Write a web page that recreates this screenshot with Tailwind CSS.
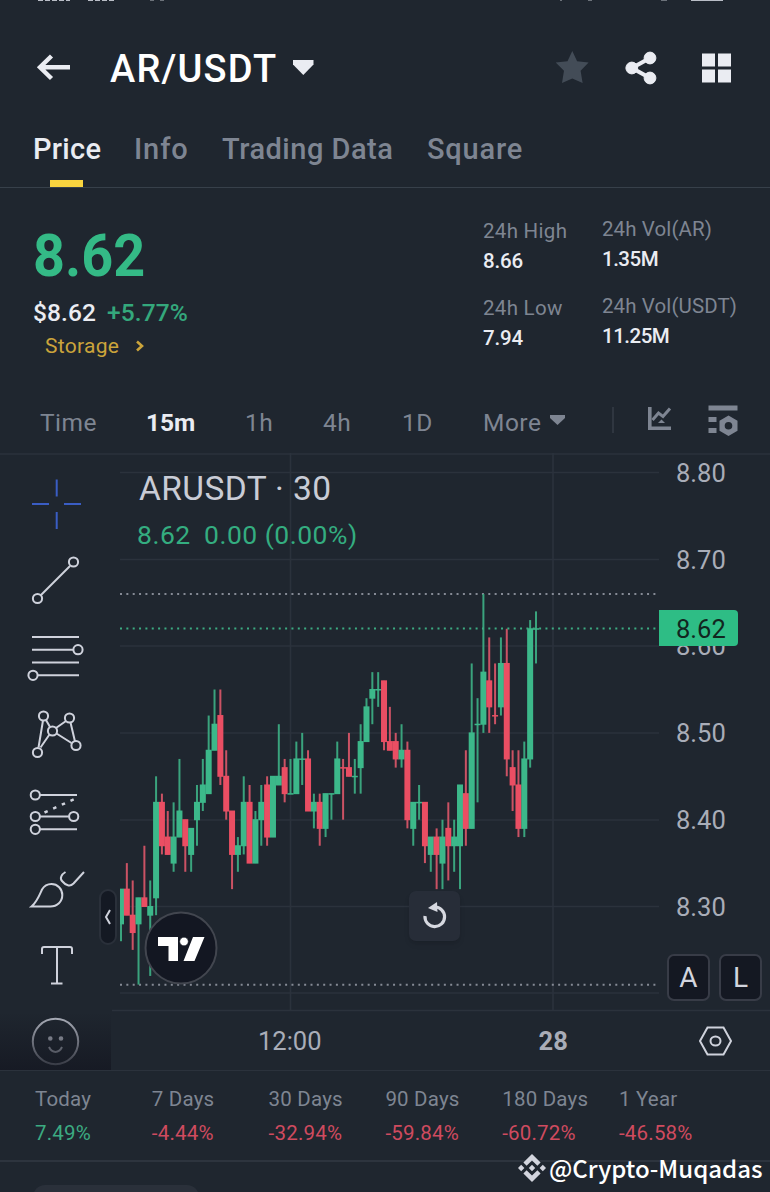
<!DOCTYPE html>
<html lang="en">

<head>
    <meta charset="UTF-8">
    <meta name="viewport" content="width=device-width, initial-scale=1.0">
    <title>AR/USDT</title>
    <script src="https://cdn.jsdelivr.net/npm/@tailwindcss/browser@4"></script>
</head>

<body class="bg-[#1f262f] overflow-hidden">
    <div class="relative w-[770px] h-[1192px] overflow-hidden bg-[#1f262f] font-['Roboto',sans-serif] text-[#7e8592]">

        <!-- status bar -->
        <svg class="block w-full h-[3px]" viewBox="0 0 770 3" fill="none" stroke="#b9bdc6" stroke-width="2">
            <path d="M38 0h32M88 0h26" stroke-dasharray="5 2" />
            <path d="M150 0h4M160 0h4M560 0h2M588 0h4M661 0h6" stroke-opacity=".5" />
            <path d="M691 0h32" />
        </svg>

        <header class="flex items-center h-[108px] pt-[22px] pl-[36px] pr-[38px]">
            <svg class="w-[36px] h-[30px]" viewBox="36 53 36 30" fill="none" stroke="#eaecf2" stroke-width="4.4">
                <path d="M70 67.3H41M51.5 56L40 67.3l11.5 11.2" />
            </svg>
            <h1 id="pair" class="ml-[38px] pt-[2px] text-[38px] leading-[84px] font-medium text-white tracking-[1.2px]">AR/USDT</h1>
            <svg class="ml-[15px] w-[22px] h-[16px]" viewBox="291 60 22 16" fill="#eaecf2">
                <path d="M292 60h20.500v4.500L302.300 75 292 64.500z" />
            </svg>
            <svg class="ml-auto w-[34px] h-[34px]" viewBox="555 51 34 34" fill="#434c57">
                <path d="M572.300 51l4.800 10.200 11.500 1.400-8 8.200 2 12.200-10.300-4.600-10.300 4.600 2-12.200-8.300-8.200 11.800-1.400z" />
            </svg>
            <svg class="ml-[36px] w-[32px] h-[34px]" viewBox="625 50 32 34" fill="#eaecf2" stroke="#eaecf2">
                <path d="M650 57l-18 10 18 10" fill="none" stroke-width="4.200" />
                <circle cx="650" cy="57" r="5.900" />
                <circle cx="631.800" cy="67" r="5.900" />
                <circle cx="650" cy="77" r="5.900" />
            </svg>
            <svg class="ml-[45px] w-[30px] h-[30px]" viewBox="702 52 30 30" fill="#eaecf2">
                <path d="M702 52.500h13v13h-13zM718 52.500h13v13h-13zM702 68.500h13v13h-13zM718 68.500h13v13h-13z" />
            </svg>
        </header>

        <nav class="flex h-[77px] pl-[33px] gap-8 border-b border-[#37404a] text-[29px] leading-[76px] font-medium whitespace-nowrap">
            <span class="relative text-[#eaecf2] w-[69px] tracking-[0.3px]">Price
                <i class="absolute left-[17px] bottom-0 w-[33px] h-[7px] bg-[#f9d43f]"></i>
            </span>
            <span class="w-[56px] tracking-[0.9px]">Info</span>
            <span class="w-[173px] tracking-[0.5px]">Trading Data</span>
            <span class="tracking-[0.8px]">Square</span>
        </nav>

        <!-- price and 24h stats -->
        <section class="flex h-[204px]">
            <div class="w-[483px] pl-[33px] pt-7">
                <div class="text-[60px] leading-[80px] font-bold text-[#34ba86] origin-left scale-x-93">8.62</div>
                <div class="flex gap-[11px] pt-px text-[24.5px] leading-[32px] font-medium">
                    <span class="text-[#eaecf2] tracking-[0.1px]">$8.62</span>
                    <span class="text-[#34a87c] tracking-[0.1px]">+5.77%</span>
                </div>
                <div class="flex items-center pl-3 text-[21px] leading-[34px] text-[#cba43b]">
                    <span class="tracking-[0.3px]">Storage</span>
                    <svg class="ml-[16px] w-[10px] h-[14px]" viewBox="0 0 10 14" fill="none" stroke="#cba43b" stroke-width="2.600">
                        <path d="M2 2.500l5 4.500-5 4.500" />
                    </svg>
                </div>
            </div>
            <dl class="w-[119px] pt-[28px] text-[20.5px] leading-[30px]">
                <dt class="tracking-[0.3px]">24h High</dt>
                <dd class="mb-[17px] font-medium text-[#eaecf2] tracking-[-0.2px]">8.66</dd>
                <dt class="tracking-[0.3px]">24h Low</dt>
                <dd class="font-medium text-[#eaecf2] tracking-[-0.2px]">7.94</dd>
            </dl>
            <dl class="pt-[26px] text-[20.5px] leading-[30px]">
                <dt class="tracking-[0.1px]">24h Vol(AR)</dt>
                <dd class="mb-[17px] font-medium text-[#eaecf2] tracking-[-0.5px]">1.35M</dd>
                <dt class="tracking-[0.1px]">24h Vol(USDT)</dt>
                <dd class="font-medium text-[#eaecf2] tracking-[-0.5px]">11.25M</dd>
            </dl>
        </section>

        <!-- intervals -->
        <nav
            class="grid grid-cols-[106px_99px_78px_79px_81px_129px_35px_60px_30px] items-center h-[63px] pl-10 border-b-2 border-[#272e38] text-[24.5px] tracking-[0.5px] leading-[61px]">
            <span>Time</span>
            <span class="font-bold text-[#eaecf2] tracking-normal">15m</span>
            <span>1h</span>
            <span>4h</span>
            <span>1D</span>
            <span class="flex items-center">More
                <svg class="ml-[9px] mb-[5px] w-[15px] h-[10px]" viewBox="0 0 15 10" fill="#7e8592">
                    <path d="M0 0h15v3L7.500 10 0 3z" />
                </svg>
            </span>
            <i class="mb-[6px] w-[2px] h-[26px] bg-[#2f3640]"></i>
            <svg class="mb-[3px] ml-px w-[24px] h-[30px]" viewBox="648 407 24 30" fill="none" stroke="#7e8592" stroke-width="3.600">
                <path d="M649.800 408v21.200H671" />
                <path d="M652.500 421l6-7 4.500 3.500 7-8" stroke-width="3" />
                <path d="M658 424l3.500-3.500 3.500 3.500z" fill="#7e8592" stroke="none" />
            </svg>
            <svg class="mb-[4px] ml-px w-[30px] h-[32px]" viewBox="708 405 30 32" fill="#7e8592">
                <path d="M708.500 405.500h29v5h-29zM708.500 417h8v5h-8zM708.500 428h8v5h-8z" />
                <path fill-rule="evenodd" d="M728.500 415.500l9 5.300v10l-9 5.300-9-5.300v-10zM728.500 422a3.800 3.800 0 100 7.600 3.800 3.800 0 100-7.600z" />
            </svg>
        </nav>

        <main class="relative flex h-[615px]">
            <!-- drawing tools -->
            <div class="flex flex-col w-[112px] pt-[11px]">
                <svg class="w-[112px] h-[77px]" viewBox="0 466 112 77" stroke="#3a5dc4" stroke-width="2">
                    <path d="M32 504h17M64 504h17M56.700 479.500v17M56.700 512v17" />
                </svg>
                <svg class="w-[112px] h-[77px]" viewBox="0 543 112 77" fill="none" stroke="#cfd2dc" stroke-width="2">
                    <path d="M41 595l29-29" />
                    <circle cx="37.500" cy="598.500" r="4.600" />
                    <circle cx="73.500" cy="562" r="4.600" />
                </svg>
                <svg class="w-[112px] h-[77px]" viewBox="0 620 112 77" fill="none" stroke="#cfd2dc" stroke-width="2">
                    <path d="M32 637h47M32 649.700h41.500M32 662.500h47M38 675.300h41" />
                    <circle cx="78" cy="649.700" r="4.600" />
                    <circle cx="33" cy="675.300" r="4.600" />
                </svg>
                <svg class="w-[112px] h-[77px]" viewBox="0 697 112 77" fill="none" stroke="#cfd2dc" stroke-width="2">
                    <path d="M43 720.500l-4.500 27M46 720l4 7M56 728l10-7M70.500 722.500l4.500 19M56.500 733.500l15 9.500M49.500 734.500l-9 13" />
                    <circle cx="43.500" cy="716" r="4.600" />
                    <circle cx="69.500" cy="718" r="4.600" />
                    <circle cx="52.500" cy="731" r="4.600" />
                    <circle cx="37.500" cy="752.500" r="4.600" />
                    <circle cx="76" cy="745.500" r="4.600" />
                </svg>
                <svg class="w-[112px] h-[77px]" viewBox="0 774 112 77" fill="none" stroke="#cfd2dc" stroke-width="2">
                    <path d="M40 795h37M40 816.500h29M40 829.300h37" />
                    <path d="M44.500 812.500l30-13.500" stroke-width="2.500" stroke-dasharray="3.500 6" />
                    <circle cx="35.300" cy="795" r="4.600" />
                    <circle cx="35.300" cy="816.500" r="4.600" />
                    <circle cx="73.700" cy="816.500" r="4.600" />
                    <circle cx="35.300" cy="829.300" r="4.600" />
                </svg>
                <svg class="w-[112px] h-[77px]" viewBox="0 851 112 77" fill="none" stroke="#cfd2dc" stroke-width="2">
                    <path d="M31.500 906.500C37 902 39.500 895 42 889.500c2-3.500 5.500-5.500 9.500-5.500 6 0 10.800 4.800 10.800 11 0 6.500-5 11.500-12 11.500z" />
                    <path d="M65.500 872c-4 2.500-6 6-3.500 9 2 2.500 4 4 6.500 4.500 2 .500 3.500-.500 5-2L84 872" />
                </svg>
                <svg class="w-[112px] h-[77px]" viewBox="0 928 112 77" fill="none" stroke="#cfd2dc" stroke-width="2">
                    <path d="M42 954v-5q0-2 2-2h26q2 0 2 2v5M57 947v36.500M51 983.500h11.500" />
                </svg>
                <svg class="w-[112px] h-[65px]" viewBox="0 1005 112 65" fill="none" stroke="#b4b8c3" stroke-width="2">
                    <circle cx="55.500" cy="1041.500" r="22.700" />
                    <path d="M49 1047c3 6.500 10 6.500 13 0" />
                    <circle cx="50.300" cy="1038.500" r="1.300" fill="#b4b8c3" />
                    <circle cx="61" cy="1038.500" r="1.300" fill="#b4b8c3" />
                </svg>
            </div>
            <div class="absolute left-0 bottom-0 w-[111px] h-[58px] bg-linear-to-b from-[#151822]/0 to-[#151822]/85"></div>

            <!-- candles, grid, price scale -->
            <svg class="w-[658px] h-[615px] overflow-visible" viewBox="112 455 658 615" font-family="Roboto, sans-serif">
                <path d="M120 472.500h539M120 559.500h539M120 646h539M120 733h539M120 820h539M120 906.500h539M120 993h539M290.500 453v557M553 453v557M112 1010.500h658"
                    stroke="#2b323c" stroke-width="1.600" />
                <path d="M120 594h537M120 984.700h537" stroke="#858a95" stroke-width="2" stroke-dasharray="2 4.350" />
                <g id="candles"></g>
                <path d="M120 628.500h537" stroke="#3cab82" stroke-width="2" stroke-dasharray="2 4.350" />
                <g fill="#a9adb8" font-size="25.500">
                    <text x="676" y="481.500">8.80</text>
                    <text x="676" y="568.500">8.70</text>
                    <text x="676" y="655">8.60</text>
                    <text x="676" y="742">8.50</text>
                    <text x="676" y="829">8.40</text>
                    <text x="676" y="915.500">8.30</text>
                    <text x="258" y="1050">12:00</text>
                    <text x="538.500" y="1050" font-weight="700">28</text>
                </g>
                <path d="M659 610h75q4 0 4 4v28q0 4-4 4h-75z" fill="#2ebd85" />
                <text x="676" y="637.500" font-size="25.500" fill="#12261f">8.62</text>
                <text x="139" y="500" font-size="33.500" letter-spacing=".4" fill="#c9ccd6">ARUSDT · 30</text>
                <g font-size="26.500" letter-spacing=".5" fill="#34ad80">
                    <text x="137" y="543.500">8.62</text>
                    <text x="204" y="543.500">0.00 (0.00%)</text>
                </g>
                <path d="M707.500 1027.500h16l7.500 13.500-7.500 13.500h-16L700 1041z" fill="none" stroke="#cfd2dc" stroke-width="2" />
                <ellipse cx="715.500" cy="1041" rx="5" ry="4.500" fill="none" stroke="#cfd2dc" stroke-width="2" />
            </svg>

            <div class="absolute left-[99px] top-[434px] flex items-center justify-center w-[18px] h-[56px] rounded-[9px] bg-[#141923] border-2 border-[#2a303a]">
                <svg class="w-[8px] h-[18px]" viewBox="0 0 8 18" fill="none" stroke="#cfd2dc" stroke-width="2">
                    <path d="M6 2L2 9l4 7" />
                </svg>
            </div>

            <svg class="absolute left-[144px] top-[456px] w-[74px] h-[74px]" viewBox="144 911 74 74">
                <circle cx="181" cy="948" r="35.500" fill="#131722" stroke="#42464f" stroke-width="2" />
                <path d="M158 937h20v24h-9.500v-15H158zM193 937h11.500l-10 24h-11z" fill="#fff" />
                <circle cx="184" cy="941.500" r="4.300" fill="#fff" stroke="#131722" stroke-width=".6" />
            </svg>

            <div class="absolute left-[409px] top-[436px] flex items-center justify-center w-[51px] h-[50px] rounded-[7px] bg-[#272d38] shadow-md">
                <svg class="w-[26px] h-[30px]" viewBox="421.500 901.500 26 30" fill="none" stroke="#d6d8e0" stroke-width="3.200">
                    <path d="M424.500 916.500a9.800 9.800 0 1 0 9.500-9" />
                    <path d="M427.500 908.500l9-6 .500 10z" fill="#d6d8e0" stroke="none" />
                </svg>
            </div>

            <div class="absolute left-[667px] top-[499px] flex gap-[9px] text-[28px] leading-[43px] text-center text-[#d3d5de]">
                <span class="w-[43px] h-[47px] rounded-[7px] border-2 border-[#383c47] bg-[#141822]">A</span>
                <span class="w-[43px] h-[47px] rounded-[7px] border-2 border-[#383c47] bg-[#141822]">L</span>
            </div>
        </main>

        <!-- performance -->
        <section
            class="grid grid-cols-[repeat(6,116.8px)] h-[92px] pl-[35px] pt-[11px] border-t border-b-2 border-t-[#2b323c] border-b-[#2d343e] text-[20.5px] leading-[34px] tracking-[0.2px]">
            <div>Today<p class="text-[#3cab82]">7.49%</p></div>
            <div>7 Days<p class="text-[#cf4b5f]">-4.44%</p></div>
            <div>30 Days<p class="text-[#cf4b5f]">-32.94%</p></div>
            <div>90 Days<p class="text-[#cf4b5f]">-59.84%</p></div>
            <div>180 Days<p class="text-[#cf4b5f]">-60.72%</p></div>
            <div>1 Year<p class="text-[#cf4b5f]">-46.58%</p></div>
        </section>
        <div class="mt-[23px] ml-[33px] w-[166px] h-10 rounded-xl bg-[#2a303a]"></div>

        <!-- watermark -->
        <div class="absolute left-[518px] top-[1150px] flex items-center gap-[3px] h-[36px] text-white text-[24px] leading-[36px] font-medium font-['Noto_Sans_CJK_SC',sans-serif] whitespace-nowrap">
            <svg class="w-[28px] h-[28px]" viewBox="0 0 28 28" fill="#d3d5de">
                <path d="M14 0l8.600 8.600-3.200 3.200L14 6.400l-5.400 5.400-3.200-3.200zM14 28l-8.600-8.600 3.200-3.200 5.400 5.400 5.400-5.400 3.200 3.200zM14 10.800l3.200 3.200-3.200 3.200-3.200-3.200zM3.200 10.800L6.400 14l-3.200 3.200L0 14zM24.800 10.800L28 14l-3.200 3.200-3.200-3.200z" />
            </svg>
            <span>@Crypto-Muqadas</span>
        </div>
    </div>

    <script>
        // [high, body top, body bottom, low, up] in cents
        const candles = [
            [832, 832, 828, 826, 1], [835, 832, 829, 829, 0], [833, 829, 827, 825, 0], [831, 831, 828, 821, 1],
            [837, 831, 830, 830, 0], [833, 830, 829, 822, 1], [845, 842, 831, 829, 1], [843, 842, 837, 836, 0],
            [841, 838, 836, 836, 0], [842, 838, 835, 834, 1], [847, 841, 838, 838, 1], [840, 840, 837, 834, 0],
            [839, 839, 836, 834, 1], [844, 842, 840, 837, 1], [847, 844, 842, 841, 1], [852, 848, 843, 843, 1],
            [855, 851, 848, 848, 1], [855, 852, 845, 844, 0], [848, 845, 841, 840, 0], [841, 841, 836, 832, 0],
            [838, 837, 836, 834, 1], [845, 842, 837, 836, 1], [844, 842, 835, 835, 0], [841, 840, 835, 835, 1],
            [844, 842, 840, 837, 1], [845, 844, 838, 837, 0], [845, 845, 838, 838, 1], [851, 845, 844, 844, 1],
            [847, 846, 843, 842, 0], [847, 843, 843, 843, 1], [849, 847, 843, 843, 1], [850, 847, 847, 844, 1],
            [848, 847, 841, 841, 0], [843, 842, 841, 839, 1], [843, 842, 839, 837, 0], [843, 843, 839, 838, 1],
            [843, 843, 843, 840, 1], [849, 847, 843, 843, 1], [847, 846, 846, 840, 0], [850, 846, 845, 845, 0],
            [847, 845, 845, 843, 1], [851, 849, 846, 843, 1], [854, 853, 849, 849, 1], [857, 855, 854, 851, 1],
            [857, 855, 855, 853, 1], [856, 856, 849, 848, 0], [853, 849, 848, 848, 0], [850, 849, 847, 846, 0],
            [851, 848, 847, 846, 1], [849, 848, 840, 839, 0], [842, 842, 839, 837, 1], [844, 842, 842, 840, 1],
            [842, 842, 837, 835, 0], [838, 838, 836, 834, 1], [839, 838, 836, 832, 0], [840, 838, 835, 832, 1],
            [842, 839, 837, 833, 0], [840, 838, 837, 834, 1], [844, 844, 837, 832, 1], [848, 843, 839, 837, 0],
            [858, 850, 839, 839, 1], [854, 851, 851, 842, 1], [866, 857, 851, 850, 1], [861, 856, 853, 850, 0],
            [858, 852, 852, 851, 0], [861, 858, 853, 852, 1], [862, 858, 847, 845, 0], [848, 846, 844, 841, 0],
            [848, 844, 839, 838, 0], [849, 847, 839, 838, 1], [863, 862, 847, 846, 1], [864, 862, 862, 858, 1]
        ];
        const y = (p) => 472.5 + (880 - p) * 8.68;
        let bars = '';
        candles.forEach(([high, top, bottom, low, up], i) => {
            const x = 121 + i * 5.845;
            const left = Math.max(120, x - 3);
            const color = up ? '#3cb88a' : '#ea4e63';
            const wick = up ? '#3aa37d' : '#cb5264';
            bars += `<rect x="${x - 1}" y="${y(high)}" width="2" height="${y(low) - y(high)}" fill="${wick}"/>`;
            bars += `<rect x="${left}" y="${y(top) - 0.5}" width="${x + 3 - left}" height="${Math.max(1.5, y(bottom) - y(top) + 1)}" fill="${color}"/>`;
        });
        document.getElementById('candles').innerHTML = bars;
    </script>
</body>

</html>
